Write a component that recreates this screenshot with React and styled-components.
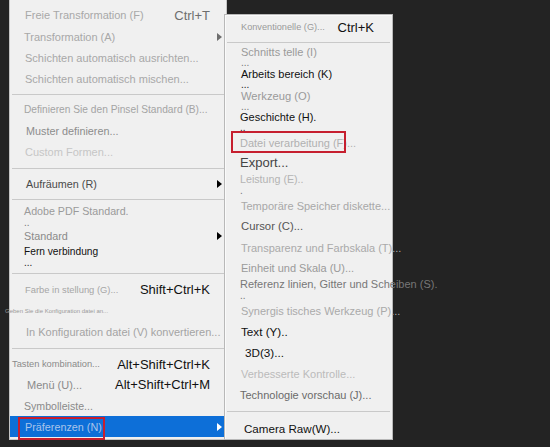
import styled, { createGlobalStyle } from "styled-components"

const GlobalStyle = createGlobalStyle`
  body {
    margin: 0;
    background: #232323;
    font-family: "Liberation Sans", Arial, sans-serif;
  }
`;

const Screen = styled.div`
  display: flex;
  align-items: flex-start;
  height: 447px;
  overflow: hidden;
  background: #232323;
`;

const Menu = styled.div`
  width: 216px;
  margin-left: 9px;
  padding: 4px 0 2px;
  background: #f0f0f0;
  border: 1px solid #c4c4c4;
  border-top: none;
  display: flex;
  flex-direction: column;
`;

const Flyout = styled.div`
  width: 167px;
  margin-left: -3px;
  margin-top: 14px;
  padding: 1px 0 0;
  background: #f0f0f0;
  border: 1px solid #b8b8b8;
  box-shadow: 1px 1px 0 #fafafa inset;
  display: flex;
  flex-direction: column;
  position: relative;
  z-index: 1;
`;

const Item = styled.div`
  position: relative;
  display: flex;
  flex-direction: ${(p) => (p.$stacked ? "column" : "row")};
  align-items: ${(p) => (p.$stacked ? "flex-start" : "center")};
  justify-content: ${(p) => (p.$stacked ? "center" : "flex-start")};
  height: ${(p) => p.$h}px;
  background: ${(p) => (p.$active ? "#0d6fd8" : "transparent")};
  white-space: nowrap;
`;

const Label = styled.span`
  margin-left: ${(p) => p.$x}px;
  font-size: ${(p) => p.$size}px;
  line-height: ${(p) => (p.$lh ? `${p.$lh}px` : "normal")};
  color: ${(p) => p.$tone};
`;

const Dots = styled.span`
  margin-left: ${(p) => p.$x}px;
  font-size: 10px;
  line-height: ${(p) => p.$lh}px;
  color: ${(p) => p.$tone};
`;

const Key = styled.span`
  margin-left: auto;
  padding-right: ${(p) => p.$pad}px;
  font-size: 13px;
  color: ${(p) => p.$tone};
`;

const Arrow = styled.span`
  margin-left: auto;
  margin-right: 4px;
  width: 0;
  height: 0;
  border-left: 5px solid ${(p) => p.$tone};
  border-top: 4px solid transparent;
  border-bottom: 4px solid transparent;
`;

const Separator = styled.div`
  height: ${(p) => p.$h}px;
  display: flex;
  align-items: center;
  &::after {
    content: "";
    flex: 1;
    margin: 0 ${(p) => p.$inset}px;
    border-top: 1px solid #c9c9c9;
  }
`;

const Mark = styled.div`
  position: absolute;
  left: ${(p) => p.$left}px;
  top: ${(p) => p.$top}px;
  width: ${(p) => p.$w}px;
  height: ${(p) => p.$hh}px;
  border: 2px solid #c61f2f;
  box-sizing: border-box;
  pointer-events: none;
`;

const leftItems = [
  { label: "Freie Transformation (F)", h: 22, x: 15, size: 11, tone: "#a8a8a8", key: "Ctrl+T", keyTone: "#6e6e6e" },
  { label: "Transformation (A)", h: 21, x: 14, size: 11, tone: "#a8a8a8", arrow: "#6e6e6e" },
  { label: "Schichten automatisch ausrichten...", h: 21, x: 15, size: 11, tone: "#a8a8a8" },
  { label: "Schichten automatisch mischen...", h: 21, x: 15, size: 11, tone: "#a8a8a8" },
  { sep: 10 },
  { label: "Definieren Sie den Pinsel Standard (B)...", h: 21, x: 14, size: 10.2, tone: "#a4a4a4" },
  { label: "Muster definieren...", h: 21, x: 16, size: 10.8, tone: "#8c8c8c" },
  { label: "Custom Formen...", h: 21, x: 15, size: 11, tone: "#c6c6c6" },
  { sep: 12 },
  { label: "Aufräumen (R)", h: 20, x: 16, size: 10.8, tone: "#4a4a4a", arrow: "#000" },
  { sep: 10 },
  { label: "Adobe PDF Standard.", h: 23, x: 14, size: 10.7, tone: "#9a9a9a", dots: "..", lh: 14, dlh: 9 },
  { label: "Standard", h: 18, x: 14, size: 10.8, tone: "#8a8a8a", arrow: "#000" },
  { label: "Fern verbindung", h: 22, x: 14, size: 10.2, tone: "#111", dots: "...", lh: 13, dlh: 9 },
  { sep: 12 },
  { label: "Farbe in stellung (G)...", h: 21, x: 15, size: 9.4, tone: "#a6a6a6", key: "Shift+Ctrl+K", keyTone: "#111" },
  { label: "Geben Sie die Konfiguration datei an...", h: 21, x: -5, size: 6, tone: "#9a9a9a" },
  { label: "In Konfiguration datei (V) konvertieren...", h: 21, x: 16, size: 11, tone: "#a4a4a4" },
  { sep: 12 },
  { label: "Tasten kombination...", h: 20, x: 2, size: 9.3, tone: "#8a8a8a", key: "Alt+Shift+Ctrl+K", keyTone: "#111" },
  { label: "Menü (U)...", h: 21, x: 17, size: 11, tone: "#8a8a8a", key: "Alt+Shift+Ctrl+M", keyTone: "#111" },
  { label: "Symbolleiste...", h: 21, x: 14, size: 10.6, tone: "#8a8a8a" },
  { label: "Präferenzen (N)", h: 21, x: 15, size: 10.8, tone: "#a9c4ea", arrow: "#fff", active: true, mark: { left: 8, top: 1, w: 87, h: 23 } },
];

const flyoutItems = [
  { label: "Konventionelle (G)...", h: 22, x: 16, size: 9.2, tone: "#9a9a9a", key: "Ctrl+K", keyTone: "#111" },
  { sep: 8 },
  { label: "Schnitts telle (I)", h: 22, x: 16, size: 11, tone: "#9a9a9a", dots: "...", lh: 12, dlh: 10 },
  { label: "Arbeits bereich (K)", h: 22, x: 16, size: 11, tone: "#111", dots: "...", lh: 12, dlh: 10 },
  { label: "Werkzeug (O)", h: 21, x: 16, size: 11.2, tone: "#9a9a9a", dots: "...", lh: 12, dlh: 9 },
  { label: "Geschichte (H).", h: 21, x: 15, size: 11, tone: "#111", dots: "..", lh: 12, dlh: 9 },
  { label: "Datei verarbeitung (F)...", h: 21, x: 15, size: 11, tone: "#b0b0b0", mark: { left: 6, top: -1, w: 115, h: 22 } },
  { label: "Export...", h: 19, x: 15, size: 13, tone: "#444" },
  { label: "Leistung (E)..", h: 24, x: 15, size: 10.7, tone: "#b4b4b4", dots: ".", lh: 14, dlh: 10 },
  { label: "Temporäre Speicher diskette...", h: 19, x: 16, size: 11, tone: "#a8a8a8" },
  { label: "Cursor (C)...", h: 22, x: 16, size: 11.3, tone: "#555" },
  { label: "Transparenz und Farbskala (T)...", h: 21, x: 16, size: 11, tone: "#aaaaaa" },
  { label: "Einheit und Skala (U)...", h: 19, x: 16, size: 11, tone: "#9a9a9a" },
  { label: "Referenz linien, Gitter und Scheiben (S).", h: 24, x: 15, size: 11, tone: "#777", dots: "..", lh: 14, dlh: 10 },
  { label: "Synergis tisches Werkzeug (P)...", h: 19, x: 16, size: 11, tone: "#aaaaaa" },
  { label: "Text (Y)..", h: 22, x: 16, size: 11.7, tone: "#111" },
  { label: "3D(3)...", h: 21, x: 20, size: 11.7, tone: "#111" },
  { label: "Verbesserte Kontrolle...", h: 21, x: 16, size: 11, tone: "#bbbbbb" },
  { label: "Technologie vorschau (J)...", h: 21, x: 15, size: 11, tone: "#6a6a6a" },
  { sep: 12 },
  { label: "Camera Raw(W)...", h: 22, x: 19, size: 11.6, tone: "#111" },
];

const MenuRows = ({ items, keyPad, inset }) =>
  items.map((item, i) => {
    if (item.sep) return <Separator key={i} $h={item.sep} $inset={inset} />;
    return (
      <Item key={i} $h={item.h} $active={item.active} $stacked={!!item.dots}>
        <Label $x={item.x} $size={item.size} $tone={item.tone} $lh={item.lh}>
          {item.label}
        </Label>
        {item.dots && (
          <Dots $x={item.x} $lh={item.dlh} $tone={item.tone === "#111" ? "#222" : "#777"}>
            {item.dots}
          </Dots>
        )}
        {item.key && <Key $pad={keyPad} $tone={item.keyTone}>{item.key}</Key>}
        {item.arrow && <Arrow $tone={item.arrow} />}
        {item.mark && (
          <Mark $left={item.mark.left} $top={item.mark.top} $w={item.mark.w} $hh={item.mark.h} />
        )}
      </Item>
    );
  });

const App = () => {
  return (
    <>
      <GlobalStyle />
      <Screen>
        <Menu>
          <MenuRows items={leftItems} keyPad={16} inset={2} />
        </Menu>
        <Flyout>
          <MenuRows items={flyoutItems} keyPad={18} inset={2} />
        </Flyout>
      </Screen>
    </>
  );
};

export default App
